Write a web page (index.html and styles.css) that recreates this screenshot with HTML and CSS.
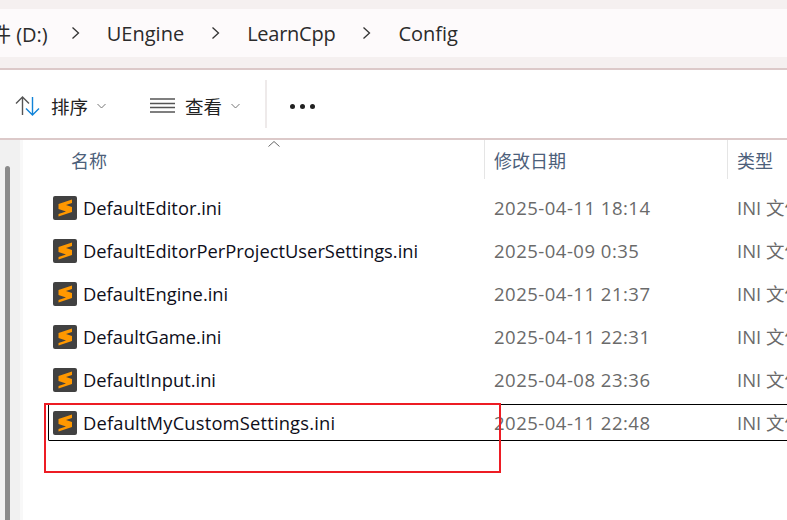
FILE: index.html
```html
<!DOCTYPE html>
<html lang="zh">
<head>
<meta charset="utf-8">
<title>Config</title>
<link rel="stylesheet" href="styles.css">
</head>
<body>
<div class="window">
  <header class="addressband">
    <nav class="breadcrumb">
      <span class="crumb drive">件 (D:)</span>
      <svg class="sep" width="10" height="14" viewBox="0 0 10 14"><path d="M1.5 1.5 7.5 7 1.5 12.5" /></svg>
      <span class="crumb">UEngine</span>
      <svg class="sep" width="10" height="14" viewBox="0 0 10 14"><path d="M1.5 1.5 7.5 7 1.5 12.5" /></svg>
      <span class="crumb tight">LearnCpp</span>
      <svg class="sep" width="10" height="14" viewBox="0 0 10 14"><path d="M1.5 1.5 7.5 7 1.5 12.5" /></svg>
      <span class="crumb">Config</span>
    </nav>
  </header>
  <div class="toolbar">
    <div class="tool sort">
      <svg class="tool-icon" width="26" height="20" viewBox="0 0 26 20">
        <path class="up" d="M1 7.5 7.5 1 14 7.5M7.5 1V19"/>
        <path class="down" d="M11 12.5 17.5 19 24 12.5M17.5 1V19"/>
      </svg>
      <span class="tool-label">排序</span>
      <svg class="caret" width="9" height="6" viewBox="0 0 9 6"><path d="M.5 1 4.5 5 8.5 1"/></svg>
    </div>
    <div class="tool view">
      <svg class="tool-icon" width="25" height="15" viewBox="0 0 25 15">
        <path d="M0 1H25M0 5.5H25M0 9.5H25M0 14H25"/>
      </svg>
      <span class="tool-label">查看</span>
      <svg class="caret" width="9" height="6" viewBox="0 0 9 6"><path d="M.5 1 4.5 5 8.5 1"/></svg>
    </div>
    <div class="divider"></div>
    <div class="more"><i></i><i></i><i></i></div>
  </div>
  <main class="content">
    <aside class="sidepane"><div class="thumb"></div></aside>
    <section class="list">
      <div class="head">
        <svg class="sort-arrow" width="12" height="6" viewBox="0 0 12 6"><path d="M.5 5.5 6 .5 11.5 5.5"/></svg>
        <div class="col col-name">名称</div>
        <div class="col col-date">修改日期</div>
        <div class="col col-type">类型</div>
      </div>
      <div class="rows">
        <div class="row">
          <div class="name"><svg class="file-icon" width="24" height="24" viewBox="0 0 24 24"><rect width="24" height="24" rx="2" fill="#414141"/><path fill="#ff9800" d="M19 3.5 5.5 8V13L13 15.5 5.5 18V20.5L19 16V11L13 9 19 7Z"/></svg><span>DefaultEditor.ini</span></div>
          <div class="date">2025-04-11 18:14</div><div class="type">INI 文件</div>
        </div>
        <div class="row">
          <div class="name"><svg class="file-icon" width="24" height="24" viewBox="0 0 24 24"><rect width="24" height="24" rx="2" fill="#414141"/><path fill="#ff9800" d="M19 3.5 5.5 8V13L13 15.5 5.5 18V20.5L19 16V11L13 9 19 7Z"/></svg><span>DefaultEditorPerProjectUserSettings.ini</span></div>
          <div class="date">2025-04-09 0:35</div><div class="type">INI 文件</div>
        </div>
        <div class="row">
          <div class="name"><svg class="file-icon" width="24" height="24" viewBox="0 0 24 24"><rect width="24" height="24" rx="2" fill="#414141"/><path fill="#ff9800" d="M19 3.5 5.5 8V13L13 15.5 5.5 18V20.5L19 16V11L13 9 19 7Z"/></svg><span>DefaultEngine.ini</span></div>
          <div class="date">2025-04-11 21:37</div><div class="type">INI 文件</div>
        </div>
        <div class="row">
          <div class="name"><svg class="file-icon" width="24" height="24" viewBox="0 0 24 24"><rect width="24" height="24" rx="2" fill="#414141"/><path fill="#ff9800" d="M19 3.5 5.5 8V13L13 15.5 5.5 18V20.5L19 16V11L13 9 19 7Z"/></svg><span>DefaultGame.ini</span></div>
          <div class="date">2025-04-11 22:31</div><div class="type">INI 文件</div>
        </div>
        <div class="row">
          <div class="name"><svg class="file-icon" width="24" height="24" viewBox="0 0 24 24"><rect width="24" height="24" rx="2" fill="#414141"/><path fill="#ff9800" d="M19 3.5 5.5 8V13L13 15.5 5.5 18V20.5L19 16V11L13 9 19 7Z"/></svg><span>DefaultInput.ini</span></div>
          <div class="date">2025-04-08 23:36</div><div class="type">INI 文件</div>
        </div>
        <div class="row selected">
          <div class="name"><svg class="file-icon" width="24" height="24" viewBox="0 0 24 24"><rect width="24" height="24" rx="2" fill="#414141"/><path fill="#ff9800" d="M19 3.5 5.5 8V13L13 15.5 5.5 18V20.5L19 16V11L13 9 19 7Z"/></svg><span class="wide">DefaultMyCustomSettings.ini</span></div>
          <div class="date">2025-04-11 22:48</div><div class="type">INI 文件</div>
        </div>
      </div>
    </section>
  </main>
  <div class="annotation"></div>
</div>
</body>
</html>
```
FILE: styles.css
```css
* { box-sizing: border-box; }
html, body { margin: 0; padding: 0; background: #fff; }
body {
  font-family: "Open Sans", "Noto Sans CJK SC", sans-serif;
  color: #1a1a1a;
}
.window {
  position: relative;
  width: 787px;
  height: 520px;
  overflow: hidden;
  display: flex;
  flex-direction: column;
}
.addressband {
  height: 70px;
  background: #f5f0f0;
  border-bottom: 2px solid #dcc9c9;
  padding-top: 9px;
}
.breadcrumb {
  height: 48px;
  background: #fdfafb;
  display: flex;
  align-items: center;
  font-size: 20px;
  color: #2b2b2b;
  white-space: nowrap;
  padding-left: 0;
}
.crumb { display: block; flex: none; }
.drive { margin: 0 -4px 0 -9px; }
.tight { letter-spacing: -.25px; }
.sep { fill: none; stroke: #333; stroke-width: 1.3; margin: 0 26px 0 27px; flex: none; }
.toolbar {
  height: 70px;
  border-bottom: 2px solid #dcc9c9;
  display: flex;
  align-items: center;
  padding: 3px 0 0 15px;
  background: #fff;
}
.tool { display: flex; align-items: center; }
.tool-icon { fill: none; stroke-width: 1.4; flex: none; }
.up { stroke: #555; }
.down { stroke: #1183d8; }
.view .tool-icon { stroke: #555; }
.tool-label { font-size: 18.5px; color: #222; }
.sort .tool-label { margin-left: 10px; }
.view { margin-left: 44px; }
.view .tool-label { margin-left: 10px; }
.caret { fill: none; stroke: #777; stroke-width: 1; margin-left: 9px; margin-top: 1px; }
.divider { width: 2px; height: 48px; background: #eeeaea; margin: -3px 0 0 25px; }
.more { display: flex; gap: 5px; margin: 2px 0 0 23px; }
.more i { width: 5px; height: 5px; background: #222; border-radius: 50%; display: block; }
.content { flex: 1; display: flex; min-height: 0; }
.sidepane {
  width: 23px;
  flex: none;
  background: #f1f1f1;
  border-right: 3px solid #f8f8f8;
  padding: 26px 0 0 5px;
}
.thumb { width: 5px; height: 400px; background: #8a8a8a; border-radius: 3px 3px 0 0; }
.list { flex: 1; min-width: 0; position: relative; }
.head { display: flex; height: 41px; font-size: 18px; color: #4c607a; position: relative; padding-bottom: 2px; }
.sort-arrow { position: absolute; left: 245px; top: 1px; fill: none; stroke: #666; stroke-width: 1; }
.col { display: flex; align-items: center; padding-left: 9px; flex: none; }
.col-name { width: 462px; padding-left: 48px; border-right: 1px solid #e5e5e5; }
.col-date { width: 243px; border-right: 1px solid #e5e5e5; }
.col-type { width: 60px; }
.rows { display: flex; flex-direction: column; gap: 6px; padding-top: 8px; }
.row {
  height: 37px;
  display: flex;
  align-items: center;
  margin-left: 25px;
  width: 800px;
  white-space: nowrap;
  border: 1px solid transparent;
  border-radius: 1px;
  padding-top: 1px;
}
.row.selected { border-color: #000; }
.name { width: 436px; flex: none; display: flex; align-items: center; padding-left: 4px; font-size: 18.33px; color: #0e0e1a; }
.name span { margin-bottom: 2px; }
.name .wide { letter-spacing: .18px; }
.file-icon { flex: none; margin-right: 6px; }
.date { width: 243px; flex: none; padding-left: 9px; padding-bottom: 2px; font-size: 18.5px; letter-spacing: .5px; color: #6a6a6a; }
.type { flex: none; padding-left: 9px; padding-bottom: 2px; font-size: 18.5px; color: #6a6a6a; }
.annotation {
  position: absolute;
  left: 44px;
  top: 403px;
  width: 457px;
  height: 70px;
  border: 2px solid #ed1c24;
}
```
